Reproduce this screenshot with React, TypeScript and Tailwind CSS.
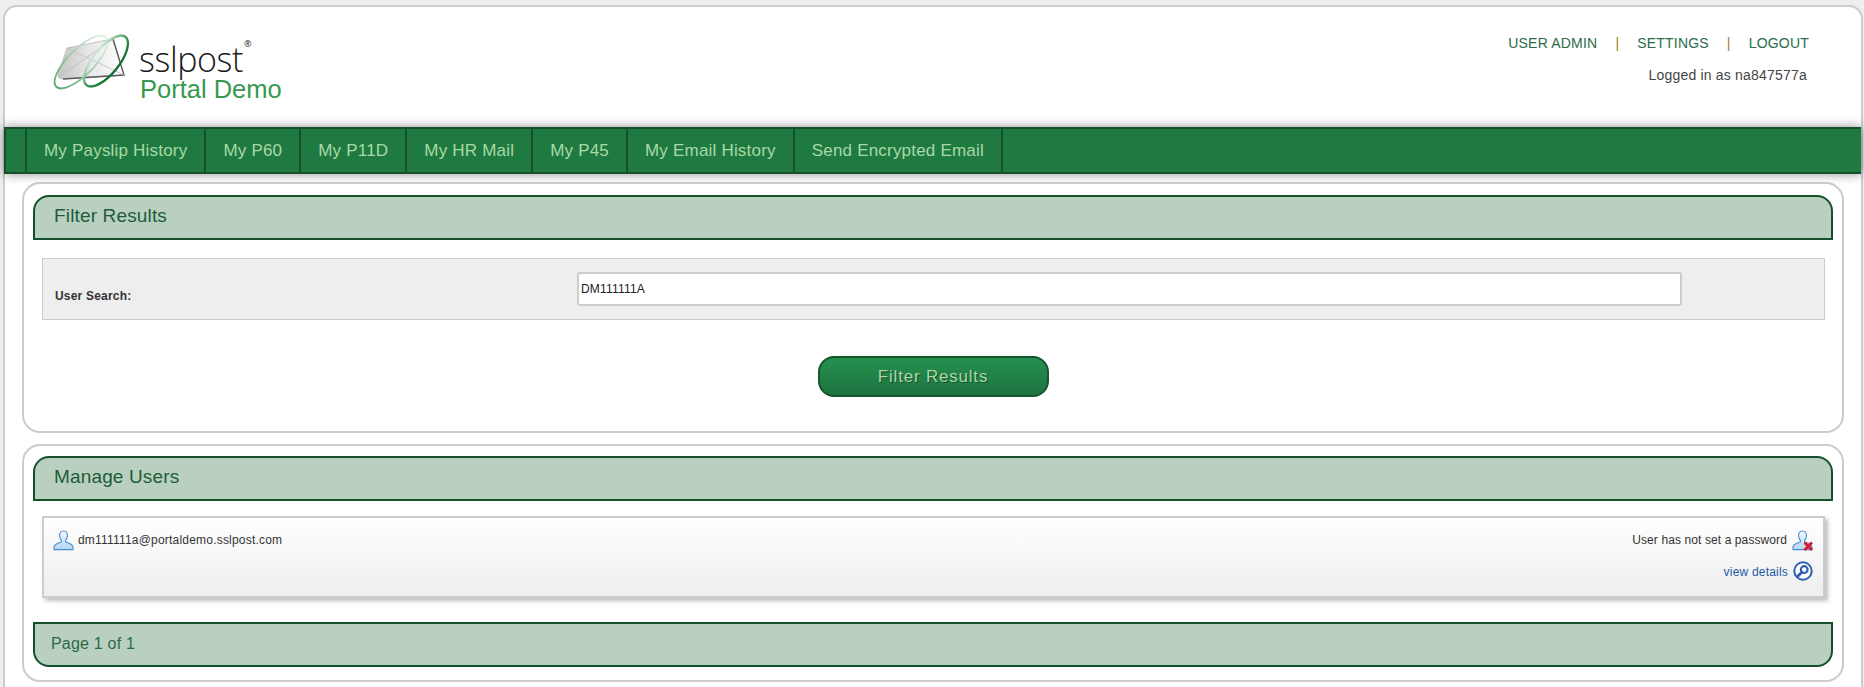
import React from "react";

const navItems = ["My Payslip History", "My P60", "My P11D", "My HR Mail", "My P45", "My Email History", "Send Encrypted Email"];

function Logo() {
  return (
    <svg width="90" height="66" viewBox="0 0 90 66" fill="none" className="shrink-0">
      <defs>
        <linearGradient id="env" x1="0" y1="0" x2="1" y2="0">
          <stop offset="0" stopColor="#c4c4c4" />
          <stop offset="0.5" stopColor="#e8e8e8" />
          <stop offset="1" stopColor="#ffffff" />
        </linearGradient>
        <linearGradient id="ringA" x1="0" y1="0" x2="0" y2="1">
          <stop offset="0" stopColor="#cfe6d3" />
          <stop offset="0.5" stopColor="#3f9a58" />
          <stop offset="1" stopColor="#14702f" />
        </linearGradient>
        <linearGradient id="ringB" x1="0" y1="0" x2="1" y2="0">
          <stop offset="0" stopColor="#5aa96c" />
          <stop offset="1" stopColor="#e2f1e5" />
        </linearGradient>
      </defs>
      <path d="M17 20 L63 11 L74 47 L13 51 Q8 51 8 47 Z" fill="url(#env)" stroke="#c0c0c0" strokeWidth="1" />
      <path d="M63 11 L74 47 L13 51" stroke="#5a5a5a" strokeWidth="1.4" />
      <path d="M17 20 L74 47 M63 11 L9 49" stroke="#bcbcbc" strokeWidth="0.8" />
      <ellipse cx="31" cy="34" rx="35" ry="13" transform="rotate(-45 31 34)" stroke="url(#ringB)" strokeWidth="1.8" />
      <ellipse cx="56" cy="33" rx="31" ry="13" transform="rotate(-51 56 33)" stroke="url(#ringA)" strokeWidth="2.4" />
    </svg>
  );
}

function UserIcon({ blocked }: { blocked?: boolean }) {
  return (
    <svg width="21" height="21" viewBox="0 0 21 21" className="shrink-0">
      <defs>
        <linearGradient id="usr" x1="0" y1="0" x2="0" y2="1">
          <stop offset="0" stopColor="#f4f9fe" />
          <stop offset="1" stopColor="#b5d6f3" />
        </linearGradient>
      </defs>
      <path
        d="M10.5 1 C7.6 1 6.3 3.2 6.6 6 C6.8 8 7.5 9.4 8.4 10.4 L8.4 12 C6 13 1.2 14 1 17 L1 19.6 L20 19.6 L20 17 C19.8 14 15 13 12.6 12 L12.6 10.4 C13.5 9.4 14.2 8 14.4 6 C14.7 3.2 13.4 1 10.5 1 Z"
        fill="url(#usr)"
        stroke="#4a8fd0"
        strokeWidth="1.1"
      />
      {blocked && <path d="M12.5 12.5 L20 20 M20 12.5 L12.5 20" stroke="#d3182e" strokeWidth="2.6" />}
    </svg>
  );
}

function SearchIcon() {
  return (
    <svg width="20" height="20" viewBox="0 0 20 20" fill="none" className="shrink-0">
      <circle cx="10" cy="10" r="8.7" fill="#fff" stroke="#2f5fb0" strokeWidth="2" />
      <circle cx="11.2" cy="8.6" r="3.4" stroke="#2f5fb0" strokeWidth="2.2" />
      <path d="M8.6 11.4 L5.2 14.8" stroke="#2f5fb0" strokeWidth="2.8" strokeLinecap="round" />
    </svg>
  );
}

function SectionBar({ title }: { title: string }) {
  return (
    <div className="h-[45px] border-2 border-[#14502c] rounded-t-[16px] bg-[#b9d0c0] pl-[19px] pb-[2px] flex items-center text-[19px] tracking-[0.15px] text-[#1d5c38]">
      {title}
    </div>
  );
}

export default function App() {
  return (
    <div className="h-[687px] overflow-hidden bg-[#eeeeee] pt-[5px] pl-[3px] pr-[1px] font-['Liberation_Sans',Arial,sans-serif]">
      <div className="h-[700px] bg-white border-2 border-[#cccccc] rounded-t-[14px]">
        {/* Header */}
        <div className="h-[120px] flex justify-between">
          <div className="pl-[45px] pt-[21px] flex items-start">
            <Logo />
            <div className="-ml-[1px] pt-[14px] flex flex-col">
              <div className="flex items-start h-[34px] leading-[34px] text-[34px] font-['Open_Sans',sans-serif] font-light tracking-[-0.4px] text-[#1a1a1a]">
                <span>sslpost</span>
                <span className="-mt-[4px] ml-[1px] text-[9px] leading-[12px] tracking-normal font-normal">®</span>
              </div>
              <div className="ml-[1px] text-[25.5px] leading-[26px] text-[#36994f]">Portal Demo</div>
            </div>
          </div>
          <div className="pt-[27px] pr-[52px] flex flex-col items-end tracking-[0.2px]">
            <div className="flex items-center text-[14px] leading-[18px] text-[#2a6b48]">
              <span>USER ADMIN</span>
              <span className="mx-[18px] text-[#a87a28]">|</span>
              <span>SETTINGS</span>
              <span className="mx-[18px] text-[#a87a28]">|</span>
              <span>LOGOUT</span>
            </div>
            <div className="mt-[14px] mr-[2px] text-[14px] leading-[18px] text-[#444444]">Logged in as na847577a</div>
          </div>
        </div>

        {/* Nav */}
        <div className="-ml-[1px] h-[47px] bg-[#1f7a41] border-y-2 border-[#174f2d] flex shadow-[0_0_10px_rgba(0,0,0,0.45)] relative">
          <div className="w-[23px] border-r-2 border-l-2 border-[#174f2d]" />
          {navItems.map((item) => (
            <div key={item} className="px-[17px] flex items-center border-r-2 border-[#174f2d] text-[17px] tracking-[0.2px] text-[#a9d9a4]">
              {item}
            </div>
          ))}
        </div>

        {/* Content */}
        <div className="pl-[17px] pr-[17px] pt-[8px] flex flex-col gap-[11px]">
          <div className="h-[251px] border-2 border-[#cccccc] rounded-[18px] px-[9px] pt-[11px]">
            <SectionBar title="Filter Results" />
            <div className="mt-[18px] ml-[9px] mr-[8px] h-[62px] bg-[#eeeeee] border border-[#cccccc] flex items-center">
              <label className="w-[534px] pl-[12px] pt-[14px] text-[12px] font-bold tracking-[0.2px] text-[#333333]">User Search:</label>
              <input
                readOnly
                value="DM111111A"
                className="w-[1105px] h-[34px] bg-white border-2 border-[#cccccc] rounded-[3px] px-[2px] text-[12px] tracking-[0.2px] text-[#222222] outline-none"
              />
            </div>
            <div className="mt-[36px] flex justify-center">
              <button className="w-[231px] h-[41px] rounded-[16px] border-2 border-[#14562e] bg-gradient-to-b from-[#26904f] to-[#1d7340] text-[17px] tracking-[0.8px] text-[#a9d9a4] [text-shadow:1px_1px_0_#14502c]">
                Filter Results
              </button>
            </div>
          </div>

          <div className="h-[238px] border-2 border-[#cccccc] rounded-[18px] px-[9px] pt-[10px]">
            <SectionBar title="Manage Users" />
            <div className="mt-[15px] ml-[9px] mr-[8px] h-[82px] border-2 border-[#cccccc] bg-gradient-to-b from-white to-[#eeeeee] shadow-[3px_3px_4px_rgba(0,0,0,0.25)] pl-[9px] pr-[10px] pt-[12px] flex justify-between text-[12px] tracking-[0.2px]">
              <div className="flex items-start gap-[4px]">
                <UserIcon />
                <span className="mt-[1px] leading-[18px] text-[#333333]">dm111111a@portaldemo.sslpost.com</span>
              </div>
              <div className="flex flex-col items-end gap-[11px]">
                <div className="flex items-start gap-[5px]">
                  <span className="mt-[1px] leading-[18px] tracking-[0.1px] text-[#333333]">User has not set a password</span>
                  <UserIcon blocked />
                </div>
                <div className="flex items-center gap-[5px] -mt-[1px]">
                  <span className="mt-[1px] text-[#1f5aa8]">view details</span>
                  <SearchIcon />
                </div>
              </div>
            </div>
            <div className="mt-[24px] h-[45px] border-2 border-[#14502c] rounded-b-[16px] bg-[#b9d0c0] pl-[16px] pb-[2px] flex items-center text-[16px] tracking-[0.2px] text-[#2a6b48]">
              Page 1 of 1
            </div>
          </div>
        </div>
      </div>
    </div>
  );
}
